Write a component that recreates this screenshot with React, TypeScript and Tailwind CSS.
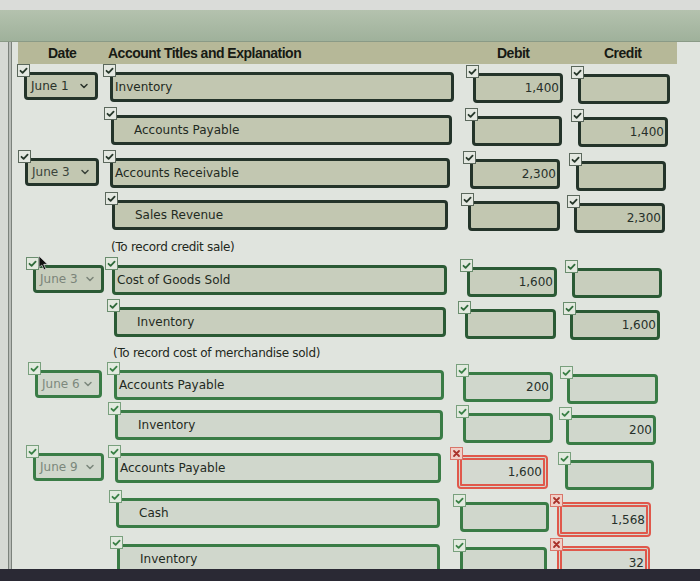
import React from "react";
import { ChevronDown } from "lucide-react";

type Tone = "dark" | "mid" | "green";

const toneBox: Record<Tone, string> = {
  dark: "border-[3px] border-[#24342a] bg-[#c2c7b1]",
  mid: "border-[3px] border-[#2b5a35] bg-[#c8cebd]",
  green: "border-[3px] border-[#3a7c46] bg-[#d0d7cc]",
};
const toneCb: Record<Tone, string> = {
  dark: "border-[#5b685c] bg-[#e4e8e1] text-[#27382b]",
  mid: "border-[#6a8d6e] bg-[#e3e9df] text-[#2f6a3a]",
  green: "border-[#79a07d] bg-[#e2eadf] text-[#3a8046]",
};

function Check({ tone, red }: { tone: Tone; red?: boolean }) {
  return (
    <div
      className={`absolute left-[-7px] top-0 z-10 flex h-[13px] w-[13px] items-center justify-center border ${
        red ? "border-[#d8766a] bg-[#f1cfc7] text-[#a9322a]" : toneCb[tone]
      }`}
    >
      <svg width="11" height="11" viewBox="0 0 11 11" fill="none">
        {red ? (
          <path d="M3 3 L8 8 M8 3 L3 8" stroke="currentColor" strokeWidth="1.8" strokeLinecap="round" />
        ) : (
          <path d="M2.5 5.8 L4.6 7.8 L8.6 3.6" stroke="currentColor" strokeWidth="1.8" strokeLinecap="round" strokeLinejoin="round" />
        )}
      </svg>
    </div>
  );
}

function Field({
  wrap,
  tone,
  red,
  h = "h-[30px]",
  children,
}: {
  wrap: string;
  tone: Tone;
  red?: boolean;
  h?: string;
  children?: React.ReactNode;
}) {
  return (
    <div className={`relative shrink-0 pt-[8px] ${wrap}`}>
      <Check tone={tone} red={red} />
      <div
        className={`flex items-center overflow-hidden rounded-[4px] ${h} ${
          red ? "border-[5px] border-double border-[#e0584b] bg-[#d4d9d0]" : toneBox[tone]
        }`}
      >
        {children}
      </div>
    </div>
  );
}

function Acct({ text, indent }: { text: string; indent?: boolean }) {
  return (
    <span className={`whitespace-nowrap text-[12px] text-[#1f2a22] ${indent ? "pl-[20px]" : "pl-[2px]"}`}>
      {text}
    </span>
  );
}

function Num({ v }: { v?: string }) {
  return <span className="w-full pr-[1px] text-right text-[12px] text-[#26302a]">{v}</span>;
}

function DateSel({ text, color }: { text: string; color: string }) {
  return (
    <div className={`flex w-full items-center pl-[4px] pr-[5px] text-[12px] ${color}`}>
      <span className="flex-1 whitespace-nowrap">{text}</span>
      <ChevronDown size={12} strokeWidth={3} />
    </div>
  );
}

export default function App() {
  return (
    <div
      className="relative h-[581px] w-[700px] overflow-hidden bg-[#dfe3dd]"
      style={{ fontFamily: '"DejaVu Sans", Verdana, sans-serif' }}
    >
      <div className="h-[10px] bg-[#dadcd9]" />
      <div className="h-[32px] bg-gradient-to-b from-[#b4c2ae] to-[#9fb19b] border-b border-[#8a9a86]" />
      <div className="flex h-[527px] overflow-hidden">
        <div className="w-[8px] shrink-0 bg-[#d6d9d4]" />
        <div className="w-[4px] shrink-0 border-x border-[#7c827c] bg-[#b9bdb8]" />
        <div className="flex-1 bg-[#e0e4de]">
          {/* header */}
          <div
            className="ml-[6px] flex h-[22px] w-[659px] items-center bg-[#b6b898] text-[14px] font-bold tracking-[-0.5px] text-[#171a14]"
            style={{ fontFamily: '"Liberation Sans", Arial, sans-serif' }}
          >
            <span className="w-[90px] shrink-0 pl-[30px]">Date</span>
            <span className="w-[389px] shrink-0">Account Titles and Explanation</span>
            <span className="w-[107px] shrink-0">Debit</span>
            <span className="shrink-0">Credit</span>
          </div>

          {/* R1 */}
          <div className="flex h-[43px] items-start">
            <Field wrap="ml-[12px] w-[74px]" tone="dark" h="h-[28px]">
              <DateSel text="June 1" color="text-[#2a332b]" />
            </Field>
            <Field wrap="ml-[12px] w-[344px]" tone="dark">
              <Acct text="Inventory" />
            </Field>
            <Field wrap="ml-[19px] w-[90px] mt-[1px]" tone="dark">
              <Num v="1,400" />
            </Field>
            <Field wrap="ml-[15px] w-[92px] mt-[2px]" tone="dark" />
          </div>

          {/* R2 */}
          <div className="flex h-[43px] items-start">
            <Field wrap="ml-[99px] w-[341px]" tone="dark">
              <Acct text="Accounts Payable" indent />
            </Field>
            <Field wrap="ml-[20px] w-[90px] mt-[1px]" tone="dark" />
            <Field wrap="ml-[16px] w-[90px] mt-[2px]" tone="dark">
              <Num v="1,400" />
            </Field>
          </div>

          {/* R3 */}
          <div className="flex h-[42px] items-start">
            <Field wrap="ml-[13px] w-[74px]" tone="dark" h="h-[28px]">
              <DateSel text="June 3" color="text-[#3a433b]" />
            </Field>
            <Field wrap="ml-[11px] w-[340px]" tone="dark">
              <Acct text="Accounts Receivable" />
            </Field>
            <Field wrap="ml-[20px] w-[90px] mt-[1px]" tone="dark">
              <Num v="2,300" />
            </Field>
            <Field wrap="ml-[16px] w-[90px] mt-[3px]" tone="dark" />
          </div>

          {/* R4 */}
          <div className="flex h-[48px] items-start">
            <Field wrap="ml-[100px] w-[336px]" tone="dark">
              <Acct text="Sales Revenue" indent />
            </Field>
            <Field wrap="ml-[20px] w-[92px] mt-[1px]" tone="dark" />
            <Field wrap="ml-[14px] w-[91px] mt-[3px]" tone="dark">
              <Num v="2,300" />
            </Field>
          </div>

          <div className="ml-[99px] h-[17px] text-[12px] leading-[14px] tracking-[-0.3px] text-[#1f2820]">
            (To record credit sale)
          </div>

          {/* R6 */}
          <div className="flex h-[42px] items-start">
            <div className="relative">
              <Field wrap="ml-[21px] w-[71px]" tone="mid" h="h-[28px]">
                <DateSel text="June 3" color="text-[#7b8479]" />
              </Field>
              <svg className="absolute left-[26px] top-[-2px] z-20" width="11" height="16" viewBox="0 0 11 16">
                <path d="M1 1 L1 12.5 L3.8 10 L6 14.8 L7.9 14 L5.7 9.3 L9.5 9.3 Z" fill="#111" stroke="#ddd" strokeWidth="0.7" />
              </svg>
            </div>
            <Field wrap="ml-[8px] w-[335px]" tone="mid">
              <Acct text="Cost of Goods Sold" />
            </Field>
            <Field wrap="ml-[20px] w-[90px] mt-[2px]" tone="mid">
              <Num v="1,600" />
            </Field>
            <Field wrap="ml-[15px] w-[90px] mt-[3px]" tone="mid" />
          </div>

          {/* R7 */}
          <div className="flex h-[47px] items-start">
            <Field wrap="ml-[102px] w-[332px]" tone="mid">
              <Acct text="Inventory" indent />
            </Field>
            <Field wrap="ml-[19px] w-[91px] mt-[2px]" tone="mid" />
            <Field wrap="ml-[14px] w-[90px] mt-[3px]" tone="mid">
              <Num v="1,600" />
            </Field>
          </div>

          <div className="ml-[101px] h-[16px] text-[12px] leading-[14px] tracking-[-0.3px] text-[#1f2820]">
            (To record cost of merchandise sold)
          </div>

          {/* R9 */}
          <div className="flex h-[40px] items-start">
            <Field wrap="ml-[23px] w-[67px]" tone="green" h="h-[28px]">
              <DateSel text="June 6" color="text-[#7d897d]" />
            </Field>
            <Field wrap="ml-[12px] w-[330px]" tone="green">
              <Acct text="Accounts Payable" />
            </Field>
            <Field wrap="ml-[19px] w-[90px] mt-[2px]" tone="green">
              <Num v="200" />
            </Field>
            <Field wrap="ml-[14px] w-[91px] mt-[4px]" tone="green" />
          </div>

          {/* R10 */}
          <div className="flex h-[43px] items-start">
            <Field wrap="ml-[103px] w-[328px]" tone="green">
              <Acct text="Inventory" indent />
            </Field>
            <Field wrap="ml-[20px] w-[90px] mt-[3px]" tone="green" />
            <Field wrap="ml-[13px] w-[90px] mt-[5px]" tone="green">
              <Num v="200" />
            </Field>
          </div>

          {/* R11 */}
          <div className="flex h-[45px] items-start">
            <Field wrap="ml-[21px] w-[71px]" tone="green" h="h-[28px]">
              <DateSel text="June 9" color="text-[#7b877b]" />
            </Field>
            <Field wrap="ml-[11px] w-[326px]" tone="green">
              <Acct text="Accounts Payable" />
            </Field>
            <Field wrap="ml-[16px] w-[91px] mt-[2px]" tone="green" red h="h-[34px]">
              <Num v="1,600" />
            </Field>
            <Field wrap="ml-[17px] w-[89px] mt-[7px]" tone="green" />
          </div>

          {/* R12 */}
          <div className="flex h-[46px] items-start">
            <Field wrap="ml-[104px] w-[324px]" tone="green">
              <Acct text="Cash" indent />
            </Field>
            <Field wrap="ml-[20px] w-[89px] mt-[4px]" tone="green" />
            <Field wrap="ml-[8px] w-[94px] mt-[4px]" tone="green" red h="h-[35px]">
              <Num v="1,568" />
            </Field>
          </div>

          {/* R13 */}
          <div className="flex h-[46px] items-start">
            <Field wrap="ml-[105px] w-[323px]" tone="green">
              <Acct text="Inventory" indent />
            </Field>
            <Field wrap="ml-[20px] w-[87px] mt-[3px]" tone="green" />
            <Field wrap="ml-[10px] w-[93px] mt-[2px]" tone="green" red h="h-[34px]">
              <Num v="32" />
            </Field>
          </div>
        </div>
      </div>
      <div className="h-[12px] bg-[#2a2934]" />
    </div>
  );
}
